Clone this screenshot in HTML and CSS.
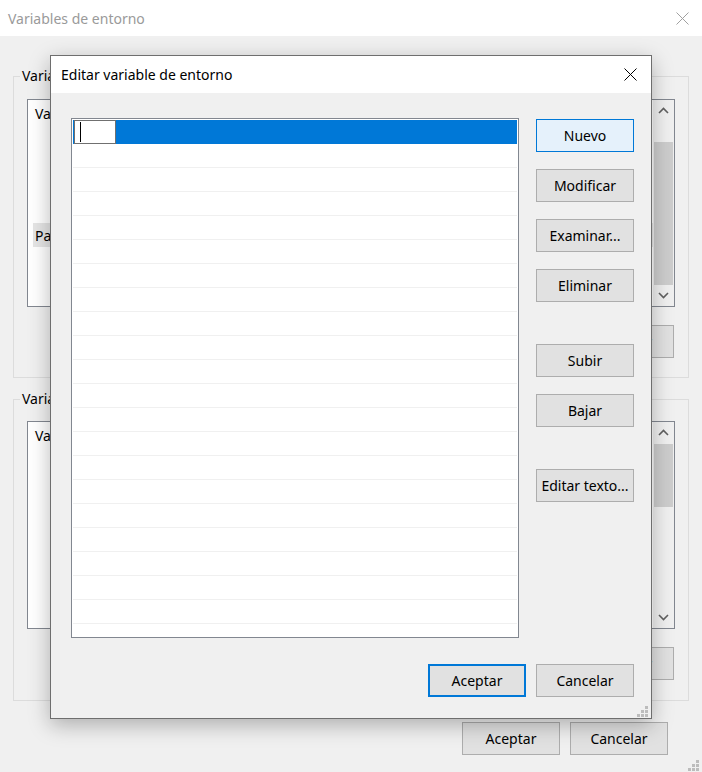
FILE: index.html
```html
<!DOCTYPE html>
<html lang="es">
<head>
<meta charset="utf-8">
<title>Variables de entorno</title>
<link rel="stylesheet" href="styles.css">
</head>
<body>
<div class="window">
  <div class="titlebar">
    <span class="win-title">Variables de entorno</span>
    <svg class="win-close" width="13" height="13" viewBox="0 0 13 13"><path d="M0.5 0.5L12.5 12.5M12.5 0.5L0.5 12.5" stroke="#a0a0a0" stroke-width="1" fill="none"/></svg>
  </div>
  <div class="win-body">
    <fieldset class="group group-user">
      <legend>Variables de usuario para Usuario</legend>
      <div class="listview">
        <div class="lv-main">
          <div class="lv-header"><span class="lv-col">Variable</span><span class="lv-col">Valor</span></div>
          <div class="lv-row"></div>
          <div class="lv-row"></div>
          <div class="lv-row"></div>
          <div class="lv-row"></div>
          <div class="lv-row lv-row-selected"><span class="lv-cell">Path</span></div>
        </div>
        <div class="vscroll">
          <div class="vs-btn"><svg width="11" height="7" viewBox="0 0 11 7"><path d="M1 6L5.5 1.5L10 6" stroke="#606060" stroke-width="1.6" fill="none"/></svg></div>
          <div class="vs-track vs-track-user"><div class="vs-thumb"></div></div>
          <div class="vs-btn"><svg width="11" height="7" viewBox="0 0 11 7"><path d="M1 1L5.5 5.5L10 1" stroke="#606060" stroke-width="1.6" fill="none"/></svg></div>
        </div>
      </div>
      <div class="group-buttons">
        <button class="btn">Nueva...</button>
        <button class="btn">Editar...</button>
        <button class="btn">Eliminar</button>
      </div>
    </fieldset>

    <fieldset class="group group-system">
      <legend>Variables del sistema</legend>
      <div class="listview">
        <div class="lv-main">
          <div class="lv-header"><span class="lv-col">Variable</span><span class="lv-col">Valor</span></div>
        </div>
        <div class="vscroll">
          <div class="vs-btn"><svg width="11" height="7" viewBox="0 0 11 7"><path d="M1 6L5.5 1.5L10 6" stroke="#606060" stroke-width="1.6" fill="none"/></svg></div>
          <div class="vs-track vs-track-system"><div class="vs-thumb"></div></div>
          <div class="vs-btn"><svg width="11" height="7" viewBox="0 0 11 7"><path d="M1 1L5.5 5.5L10 1" stroke="#606060" stroke-width="1.6" fill="none"/></svg></div>
        </div>
      </div>
      <div class="group-buttons">
        <button class="btn">Nueva...</button>
        <button class="btn">Editar...</button>
        <button class="btn">Eliminar</button>
      </div>
    </fieldset>

    <div class="win-footer">
      <button class="btn">Aceptar</button>
      <button class="btn">Cancelar</button>
    </div>
  </div>
  <svg class="grip win-grip" width="12" height="12" viewBox="0 0 12 12">
    <rect x="8" y="0" width="3" height="3" fill="#bcbcbc"/>
    <rect x="4" y="4" width="3" height="3" fill="#bcbcbc"/><rect x="8" y="4" width="3" height="3" fill="#bcbcbc"/>
    <rect x="0" y="8" width="3" height="3" fill="#bcbcbc"/><rect x="4" y="8" width="3" height="3" fill="#bcbcbc"/><rect x="8" y="8" width="3" height="3" fill="#bcbcbc"/>
  </svg>
</div>

<div class="dialog">
  <div class="dlg-titlebar">
    <span class="dlg-title">Editar variable de entorno</span>
    <svg class="dlg-close" width="13" height="13" viewBox="0 0 13 13"><path d="M0.5 0.5L12.5 12.5M12.5 0.5L0.5 12.5" stroke="#000" stroke-width="1" fill="none"/></svg>
  </div>
  <div class="dlg-body">
    <div class="dlg-main">
      <div class="entries">
        <div class="entry entry-selected"><span class="entry-edit"><span class="caret"></span></span></div>
        <div class="entry"></div><div class="entry"></div><div class="entry"></div><div class="entry"></div>
        <div class="entry"></div><div class="entry"></div><div class="entry"></div><div class="entry"></div>
        <div class="entry"></div><div class="entry"></div><div class="entry"></div><div class="entry"></div>
        <div class="entry"></div><div class="entry"></div><div class="entry"></div><div class="entry"></div>
        <div class="entry"></div><div class="entry"></div><div class="entry"></div><div class="entry"></div>
        <div class="entry"></div>
      </div>
      <div class="side-buttons">
        <button class="btn btn-hot">Nuevo</button>
        <button class="btn">Modificar</button>
        <button class="btn">Examinar...</button>
        <button class="btn">Eliminar</button>
        <button class="btn btn-sep">Subir</button>
        <button class="btn">Bajar</button>
        <button class="btn btn-sep">Editar texto...</button>
      </div>
    </div>
    <div class="dlg-footer">
      <button class="btn btn-default">Aceptar</button>
      <button class="btn">Cancelar</button>
    </div>
  </div>
  <svg class="grip dlg-grip" width="12" height="12" viewBox="0 0 12 12">
    <rect x="8" y="0" width="3" height="3" fill="#bcbcbc"/>
    <rect x="4" y="4" width="3" height="3" fill="#bcbcbc"/><rect x="8" y="4" width="3" height="3" fill="#bcbcbc"/>
    <rect x="0" y="8" width="3" height="3" fill="#bcbcbc"/><rect x="4" y="8" width="3" height="3" fill="#bcbcbc"/><rect x="8" y="8" width="3" height="3" fill="#bcbcbc"/>
  </svg>
</div>
</body>
</html>
```

FILE: styles.css
```css
* { box-sizing: border-box; }
html, body { margin: 0; padding: 0; }
body {
  font-family: "Noto Sans", "Open Sans", sans-serif;
  font-size: 14px;
  color: #000;
  background: #f0f0f0;
  overflow: hidden;
}
.window {
  position: relative;
  width: 702px;
  height: 772px;
  background: #f0f0f0;
}
.titlebar {
  height: 36px;
  background: #fff;
  display: flex;
  align-items: center;
  justify-content: space-between;
  padding: 0 13px 0 8px;
}
.win-title { color: #9a9a9a; font-size: 14px; }
.win-close { display: block; }

.win-body {
  padding: 30px 13px 0;
  display: flex;
  flex-direction: column;
}
.group {
  margin: 0;
  border: 1px solid #dcdcdc;
  padding: 13px 13px 19px 6px;
  min-width: 0;
}
.group legend {
  padding: 0 2px;
  line-height: 20px;
}
.group-system {
  margin-top: 11px;
  padding-top: 12px;
  padding-bottom: 20px;
}
.listview {
  margin-left: 7px;
  height: 208px;
  border: 1px solid #828790;
  background: #fff;
  display: flex;
}
.lv-main { flex: 1; display: flex; flex-direction: column; padding-left: 5px; }
.lv-header { height: 27px; display: flex; align-items: center; padding-left: 2px; }
.lv-col { width: 200px; }
.lv-row { height: 24px; display: flex; align-items: center; padding-left: 2px; }
.lv-row-selected { background: #e5e5e5; }

.vscroll {
  width: 21px;
  background: #f0f0f0;
  display: flex;
  flex-direction: column;
}
.vs-btn { height: 21px; display: flex; align-items: center; justify-content: center; }
.vs-track { flex: 1; display: flex; flex-direction: column; }
.vs-track-user { padding-top: 21px; }
.vs-track-user .vs-thumb { flex: 1; }
.vs-track-system { padding-top: 1px; }
.vs-track-system .vs-thumb { height: 63px; }
.vs-thumb { margin: 0 1px; background: #cdcdcd; }

.group-buttons {
  margin-top: 18px;
  margin-right: 1px;
  display: flex;
  justify-content: flex-end;
  gap: 10px;
}
.btn {
  width: 98px;
  height: 33px;
  padding: 0;
  border: 1px solid #adadad;
  background: #e1e1e1;
  font-family: inherit;
  font-size: 14px;
  color: #000;
}
.win-footer {
  margin-top: 21px;
  padding-right: 21px;
  display: flex;
  justify-content: flex-end;
  gap: 10px;
}
.grip { position: absolute; display: block; }
.win-grip { right: 2px; bottom: 0; }

/* Dialog window over the main window */
.dialog {
  position: absolute;
  left: 50px;
  top: 55px;
  width: 602px;
  height: 664px;
  border: 1px solid #6e6e6e;
  background: #f0f0f0;
  display: flex;
  flex-direction: column;
  box-shadow: 0 6px 20px rgba(0, 0, 0, 0.28);
}
.dlg-titlebar {
  height: 37px;
  background: #fff;
  display: flex;
  align-items: center;
  justify-content: space-between;
  padding: 0 14px 0 10px;
}
.dlg-title { font-size: 14px; }
.dlg-close { display: block; }
.dlg-body {
  flex: 1;
  padding: 25px 17px 21px 20px;
  display: flex;
  flex-direction: column;
}
.dlg-main {
  height: 520px;
  display: flex;
  gap: 17px;
}
.entries {
  flex: 1;
  border: 1px solid #828790;
  background: #fff;
  padding: 1px;
  overflow: hidden;
}
.entry {
  height: 24px;
  border-bottom: 1px solid #f0f0f0;
}
.entry-selected {
  background: #0078d7;
  border-bottom-color: #0078d7;
  padding-left: 1px;
}
.entry-edit {
  display: block;
  width: 42px;
  height: 24px;
  background: #fff;
  border: 1px solid #707070;
  padding: 1px 0 0 5px;
}
.caret { display: block; width: 1px; height: 20px; background: #000; }
.side-buttons {
  width: 98px;
  padding-top: 1px;
  display: flex;
  flex-direction: column;
  gap: 17px;
}
.btn-sep { margin-top: 25px; }
.btn-hot { background: #e5f1fb; border-color: #0078d7; }
.btn-default { border: 2px solid #0078d7; }
.dlg-footer {
  margin-top: 26px;
  display: flex;
  justify-content: flex-end;
  gap: 10px;
}
.dlg-grip { right: 2px; bottom: 0; }
```
